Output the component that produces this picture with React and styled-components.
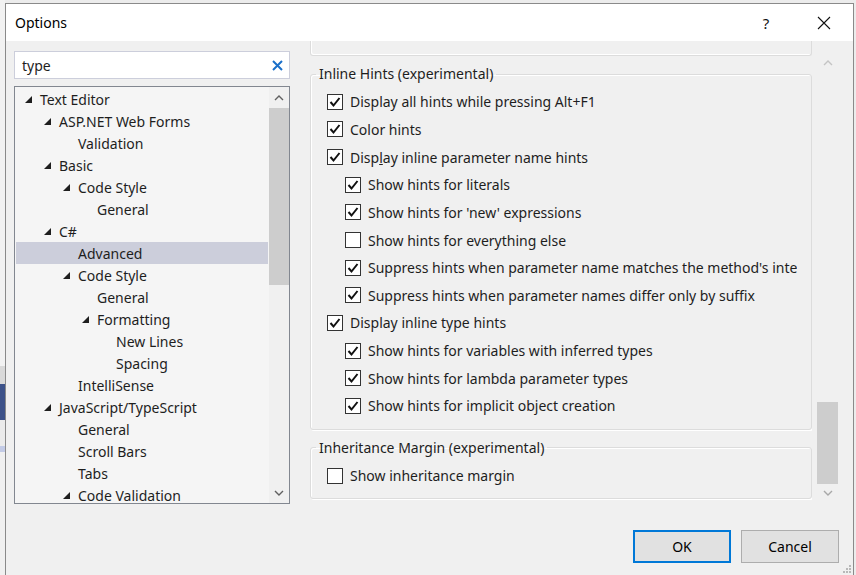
import React from "react";
import styled, { createGlobalStyle } from "styled-components";

const GlobalStyle = createGlobalStyle`
  html, body {
    margin: 0;
    padding: 0;
    overflow: hidden;
    background: #ececec;
  }
  body {
    font-family: "Segoe UI", "Noto Sans", sans-serif;
    font-size: 14px;
    color: #1e1e1e;
  }
`;

const tree = [
  { label: "Text Editor", level: 0, open: true },
  { label: "ASP.NET Web Forms", level: 1, open: true },
  { label: "Validation", level: 2 },
  { label: "Basic", level: 1, open: true },
  { label: "Code Style", level: 2, open: true },
  { label: "General", level: 3 },
  { label: "C#", level: 1, open: true },
  { label: "Advanced", level: 2, selected: true },
  { label: "Code Style", level: 2, open: true },
  { label: "General", level: 3 },
  { label: "Formatting", level: 3, open: true },
  { label: "New Lines", level: 4 },
  { label: "Spacing", level: 4 },
  { label: "IntelliSense", level: 2 },
  { label: "JavaScript/TypeScript", level: 1, open: true },
  { label: "General", level: 2 },
  { label: "Scroll Bars", level: 2 },
  { label: "Tabs", level: 2 },
  { label: "Code Validation", level: 2, open: true },
];

const hints = [
  { label: "Display all hints while pressing Alt+F1", level: 0, checked: true },
  { label: "Color hints", level: 0, checked: true },
  {
    label: (
      <>
        Disp<u>l</u>ay inline parameter name hints
      </>
    ),
    level: 0,
    checked: true,
  },
  { label: "Show hints for literals", level: 1, checked: true },
  { label: "Show hints for 'new' expressions", level: 1, checked: true },
  { label: "Show hints for everything else", level: 1, checked: false },
  {
    label: "Suppress hints when parameter name matches the method's intent",
    level: 1,
    checked: true,
  },
  {
    label: "Suppress hints when parameter names differ only by suffix",
    level: 1,
    checked: true,
  },
  { label: "Display inline type hints", level: 0, checked: true },
  { label: "Show hints for variables with inferred types", level: 1, checked: true },
  { label: "Show hints for lambda parameter types", level: 1, checked: true },
  { label: "Show hints for implicit object creation", level: 1, checked: true },
];

const stripes = [
  { h: 366, c: "#f2f2f2" },
  { h: 18, c: "#d9d9d9" },
  { h: 36, c: "#3d5289" },
  { h: 26, c: "#ebebeb" },
  { h: 6, c: "#c3cbe6" },
  { h: 123, c: "#f0f0f0" },
];

const Chevron = ({ up, color }) => (
  <svg width="10" height="6" viewBox="0 0 10 6">
    <polyline
      points={up ? "1,5 5,1 9,5" : "1,1 5,5 9,1"}
      fill="none"
      stroke={color}
      strokeWidth="1.4"
    />
  </svg>
);

const Check = () => (
  <svg width="12" height="12" viewBox="0 0 12 12">
    <polyline points="1.5,6 4.5,9.5 10.5,2" fill="none" stroke="#111" strokeWidth="2" />
  </svg>
);

const Expander = () => (
  <svg width="7" height="7" viewBox="0 0 7 7">
    <polygon points="7,0 7,7 0,7" fill="#1e1e1e" />
  </svg>
);

const App = () => {
  return (
    <>
      <GlobalStyle />
      <Page>
        <LeftStrip>
          {stripes.map((s, i) => (
            <Stripe key={i} $h={s.h} $c={s.c} />
          ))}
        </LeftStrip>
        <Window>
          <TitleBar>
            <Title>Options</Title>
            <TitleButton>?</TitleButton>
            <TitleButton>
              <svg width="14" height="14" viewBox="0 0 14 14">
                <path d="M1 1 L13 13 M13 1 L1 13" stroke="#111" strokeWidth="1.1" />
              </svg>
            </TitleButton>
          </TitleBar>

          <MainArea>
            <LeftColumn>
              <SearchBox>
                <SearchText>type</SearchText>
                <svg width="11" height="11" viewBox="0 0 11 11">
                  <path d="M1 1 L10 10 M10 1 L1 10" stroke="#1a6fc9" strokeWidth="2" />
                </svg>
              </SearchBox>
              <Tree>
                <TreeList>
                  {tree.map((node, i) => (
                    <TreeRow key={i} $level={node.level} $selected={node.selected}>
                      <ExpanderSlot>{node.open && <Expander />}</ExpanderSlot>
                      {node.label}
                    </TreeRow>
                  ))}
                </TreeList>
                <TreeScroll>
                  <ArrowCell $h={21}>
                    <Chevron up color="#606060" />
                  </ArrowCell>
                  <Thumb $h={177} />
                  <Track />
                  <ArrowCell $h={21}>
                    <Chevron color="#606060" />
                  </ArrowCell>
                </TreeScroll>
              </Tree>
            </LeftColumn>

            <RightColumn>
              <ScrollContent>
                <ClippedGroup />
                <Group>
                  <Legend>Inline Hints (experimental)</Legend>
                  <Rows>
                    {hints.map((h, i) => (
                      <CheckRow key={i} $level={h.level}>
                        <Box>{h.checked && <Check />}</Box>
                        <CheckLabel>{h.label}</CheckLabel>
                      </CheckRow>
                    ))}
                  </Rows>
                </Group>
                <Group>
                  <Legend>Inheritance Margin (experimental)</Legend>
                  <Rows>
                    <CheckRow $level={0}>
                      <Box />
                      <CheckLabel>Show inheritance margin</CheckLabel>
                    </CheckRow>
                  </Rows>
                </Group>
              </ScrollContent>
              <PaneScroll>
                <ArrowCell $h={18}>
                  <Chevron up color="#c4c4c4" />
                </ArrowCell>
                <Track />
                <Thumb $h={82} />
                <ArrowCell $h={18}>
                  <Chevron color="#a8a8a8" />
                </ArrowCell>
              </PaneScroll>
            </RightColumn>
          </MainArea>

          <Footer>
            <DialogButton $default>OK</DialogButton>
            <DialogButton>Cancel</DialogButton>
          </Footer>

          <Grip>
            <svg width="8" height="8" viewBox="0 0 8 8">
              <rect x="6" y="0" width="2" height="2" fill="#b8b8b8" />
              <rect x="3" y="3" width="2" height="2" fill="#b8b8b8" />
              <rect x="6" y="3" width="2" height="2" fill="#b8b8b8" />
              <rect x="0" y="6" width="2" height="2" fill="#b8b8b8" />
              <rect x="3" y="6" width="2" height="2" fill="#b8b8b8" />
              <rect x="6" y="6" width="2" height="2" fill="#b8b8b8" />
            </svg>
          </Grip>
        </Window>
      </Page>
    </>
  );
};

export default App;

const Page = styled.div`
  display: flex;
  align-items: flex-start;
  width: 856px;
  height: 575px;
  overflow: hidden;
  background: #ececec;
`;

const LeftStrip = styled.div`
  width: 5px;
  display: flex;
  flex-direction: column;
  flex-shrink: 0;
`;

const Stripe = styled.div`
  height: ${(p) => p.$h}px;
  background: ${(p) => p.$c};
`;

const Window = styled.div`
  position: relative;
  margin-top: 3px;
  width: 849px;
  height: 573px;
  flex-shrink: 0;
  box-sizing: border-box;
  border: 1px solid #8a8a8a;
  background: #f0f0f0;
  display: flex;
  flex-direction: column;
`;

const TitleBar = styled.div`
  height: 37px;
  background: #ffffff;
  display: flex;
  align-items: center;
  padding-left: 9px;
`;

const Title = styled.div`
  flex: 1;
  font-size: 14px;
  color: #000;
`;

const TitleButton = styled.div`
  width: 58px;
  height: 37px;
  display: flex;
  align-items: center;
  justify-content: center;
  font-size: 15px;
  color: #111;
`;

const MainArea = styled.div`
  display: flex;
  height: 464px;
  padding: 0 15px 0 8px;
`;

const LeftColumn = styled.div`
  width: 276px;
  flex-shrink: 0;
  display: flex;
  flex-direction: column;
  gap: 7px;
  padding-top: 10px;
`;

const SearchBox = styled.div`
  height: 28px;
  box-sizing: border-box;
  border: 1px solid #cccedb;
  background: #fff;
  display: flex;
  align-items: center;
  padding: 0 6px 0 7px;
`;

const SearchText = styled.div`
  flex: 1;
  color: #1e1e1e;
`;

const Tree = styled.div`
  height: 418px;
  box-sizing: border-box;
  border: 1px solid #828790;
  background: #f5f5f5;
  display: flex;
`;

const TreeList = styled.div`
  flex: 1;
  min-width: 0;
  padding: 1px;
  overflow: hidden;
`;

const TreeRow = styled.div`
  height: 22px;
  display: flex;
  align-items: center;
  padding-left: ${(p) => 9 + 19 * p.$level}px;
  background: ${(p) => (p.$selected ? "#cccedb" : "transparent")};
  white-space: nowrap;
  color: #1e1e1e;
`;

const ExpanderSlot = styled.span`
  width: 15px;
  flex-shrink: 0;
  display: flex;
  align-items: center;
  padding-top: 1px;
`;

const TreeScroll = styled.div`
  width: 20px;
  flex-shrink: 0;
  background: #f0f0f0;
  display: flex;
  flex-direction: column;
`;

const ArrowCell = styled.div`
  height: ${(p) => p.$h}px;
  flex-shrink: 0;
  display: flex;
  align-items: center;
  justify-content: center;
`;

const Thumb = styled.div`
  height: ${(p) => p.$h}px;
  flex-shrink: 0;
  background: #cdcdcd;
`;

const Track = styled.div`
  flex: 1;
`;

const RightColumn = styled.div`
  flex: 1;
  display: flex;
  gap: 5px;
  padding-left: 20px;
`;

const ScrollContent = styled.div`
  width: 502px;
  height: 464px;
  overflow: hidden;
  display: flex;
  flex-direction: column;
`;

const ClippedGroup = styled.div`
  height: 15px;
  flex-shrink: 0;
  box-sizing: border-box;
  border: 1px solid #dcdcdc;
  border-top: none;
  border-radius: 0 0 3px 3px;
  box-shadow: inset 1px -1px 0 #fff;
`;

const Group = styled.fieldset`
  margin: 8px 0 0;
  padding: 0 14px 9px 0;
  min-width: 0;
  border: 1px solid #dcdcdc;
  border-radius: 3px;
  box-shadow: inset 1px 1px 0 #fff, 1px 1px 0 #fff;
`;

const Legend = styled.legend`
  margin-left: 5px;
  padding: 0 3px;
  line-height: 20px;
  font-size: 14px;
  color: #1e1e1e;
`;

const Rows = styled.div`
  padding-top: 4px;
`;

const CheckRow = styled.div`
  height: 27.65px;
  display: flex;
  align-items: center;
  gap: 7px;
  padding-left: ${(p) => 16 + 18 * p.$level}px;
  overflow: hidden;
  white-space: nowrap;
`;

const Box = styled.span`
  width: 16px;
  height: 16px;
  box-sizing: border-box;
  flex-shrink: 0;
  border: 1px solid #333;
  background: #fff;
  display: flex;
  align-items: center;
  justify-content: center;
`;

const CheckLabel = styled.span`
  color: #1e1e1e;
`;

const PaneScroll = styled.div`
  width: 21px;
  margin-top: 13px;
  height: 448px;
  display: flex;
  flex-direction: column;
`;

const Footer = styled.div`
  display: flex;
  justify-content: flex-end;
  gap: 10px;
  padding: 25px 14px 0 0;
`;

const DialogButton = styled.div`
  width: 98px;
  height: 33px;
  box-sizing: border-box;
  border: ${(p) => (p.$default ? "2px solid #0078d7" : "1px solid #adadad")};
  background: #e1e1e1;
  display: flex;
  align-items: center;
  justify-content: center;
  font-size: 14px;
  color: #000;
`;

const Grip = styled.div`
  position: absolute;
  right: 2px;
  bottom: 2px;
  line-height: 0;
`;
